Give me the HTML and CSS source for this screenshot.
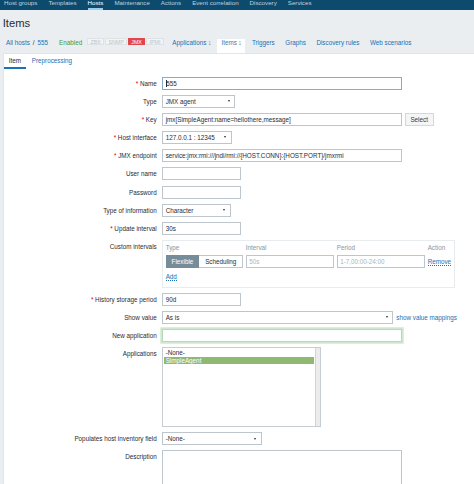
FILE: index.html
```html
<!DOCTYPE html>
<html lang="en">
<head>
<meta charset="utf-8">
<title>Items</title>
<link rel="stylesheet" href="styles.css">
</head>
<body>
<nav class="topnav">
  <a class="topnav-item">Host groups</a>
  <a class="topnav-item">Templates</a>
  <a class="topnav-item active">Hosts</a>
  <a class="topnav-item">Maintenance</a>
  <a class="topnav-item">Actions</a>
  <a class="topnav-item">Event correlation</a>
  <a class="topnav-item">Discovery</a>
  <a class="topnav-item">Services</a>
</nav>
<header class="page-header">
  <h1 class="page-title">Items</h1>
</header>
<div class="object-nav">
  <a class="crumb">All hosts</a>
  <span class="crumb-sep">/</span>
  <a class="crumb">555</a>
  <span class="status-enabled">Enabled</span>
  <span class="badges">
    <span class="badge">ZBX</span><span class="badge">SNMP</span><span class="badge badge-jmx">JMX</span><span class="badge">IPMI</span>
  </span>
  <ul class="host-tabs">
    <li class="host-tab"><a>Applications</a><sup class="count">1</sup></li>
    <li class="host-tab active"><span>Items</span><sup class="count">1</sup></li>
    <li class="host-tab"><a>Triggers</a></li>
    <li class="host-tab"><a>Graphs</a></li>
    <li class="host-tab"><a>Discovery rules</a></li>
    <li class="host-tab"><a>Web scenarios</a></li>
  </ul>
</div>
<main class="form-container">
  <ul class="tabs">
    <li class="tab active">Item</li>
    <li class="tab"><a>Preprocessing</a></li>
  </ul>
  <div class="form-grid">
    <div class="form-label"><span class="req">*</span> Name</div>
    <div class="field"><div class="input w-wide focused"><span class="caret"></span>555</div></div>

    <div class="form-label">Type</div>
    <div class="field"><div class="input select w-type">JMX agent</div></div>

    <div class="form-label"><span class="req">*</span> Key</div>
    <div class="field"><div class="input w-wide">jmx[SimpleAgent:name=hellothere,message]</div><button class="btn-grey" type="button">Select</button></div>

    <div class="form-label"><span class="req">*</span> Host interface</div>
    <div class="field"><div class="input select w-iface">127.0.0.1 : 12345</div></div>

    <div class="form-label"><span class="req">*</span> JMX endpoint</div>
    <div class="field"><div class="input w-wide">service:jmx:rmi:///jndi/rmi://{HOST.CONN}:{HOST.PORT}/jmxrmi</div></div>

    <div class="form-label">User name</div>
    <div class="field"><div class="input w-small"></div></div>

    <div class="form-label">Password</div>
    <div class="field"><div class="input w-small"></div></div>

    <div class="form-label">Type of information</div>
    <div class="field"><div class="input select w-info">Character</div></div>

    <div class="form-label"><span class="req">*</span> Update interval</div>
    <div class="field"><div class="input w-small">30s</div></div>

    <div class="form-label">Custom intervals</div>
    <div class="field">
      <div class="intervals">
        <div class="intervals-grid">
          <div class="int-head">Type</div>
          <div class="int-head">Interval</div>
          <div class="int-head">Period</div>
          <div class="int-head">Action</div>
          <div class="seg">
            <span class="seg-btn seg-flex active">Flexible</span><span class="seg-btn seg-sched">Scheduling</span>
          </div>
          <div class="input placeholder">50s</div>
          <div class="input placeholder">1-7,00:00-24:00</div>
          <div class="int-action"><a class="dotted">Remove</a></div>
        </div>
        <div class="int-add"><a class="dotted">Add</a></div>
      </div>
    </div>

    <div class="form-label"><span class="req">*</span> History storage period</div>
    <div class="field"><div class="input w-small">90d</div></div>

    <div class="form-label">Show value</div>
    <div class="field"><div class="input select w-show">As is</div><a class="mapping-link">show value mappings</a></div>

    <div class="form-label">New application</div>
    <div class="field"><div class="input w-wide highlight"></div></div>

    <div class="form-label">Applications</div>
    <div class="field">
      <div class="listbox">
        <div class="options">
          <div class="option">-None-</div>
          <div class="option selected">SimpleAgent</div>
        </div>
        <div class="scrollbar"></div>
      </div>
    </div>

    <div class="form-label">Populates host inventory field</div>
    <div class="field"><div class="input select w-inv">-None-</div></div>

    <div class="form-label">Description</div>
    <div class="field"><div class="input textarea w-wide"></div></div>
  </div>
</main>
</body>
</html>
```

FILE: styles.css
```css
* { box-sizing: border-box; }
html, body { margin: 0; padding: 0; }
body {
  width: 474px;
  height: 484px;
  overflow: hidden;
  background: #ebeef0;
  font-family: "Liberation Sans", Arial, sans-serif;
  font-size: 6.3px;
  color: #1f2c33;
}
a { color: #1a6fb3; text-decoration: none; }

/* top navigation */
.topnav {
  display: flex;
  gap: 11px;
  height: 10px;
  padding-left: 4px;
  background: #0c4a6e;
  overflow: hidden;
}
.topnav-item {
  display: block;
  height: 10px;
  line-height: 5.2px;
  font-size: 6.2px;
  color: #c3d2dc;
  white-space: nowrap;
}
.topnav-item.active {
  color: #ffffff;
  box-shadow: inset 0 -2px 0 #9ccdee;
}

/* header */
.page-header {
  height: 29.3px;
  padding: 5.5px 0 0 2.7px;
}
.page-title {
  margin: 0;
  font-size: 11.2px;
  line-height: 14px;
  font-weight: normal;
  color: #1f2c33;
}

/* object nav / breadcrumbs */
.object-nav {
  display: flex;
  align-items: flex-start;
  height: 13.4px;
  padding-left: 6px;
  white-space: nowrap;
}
.crumb, .crumb-sep, .status-enabled { line-height: 8.6px; }
.crumb-sep { margin: 0 3px; color: #1f2c33; }
.status-enabled { margin-left: 11px; color: #3f9a43; }
.badges {
  display: flex;
  gap: 1px;
  margin: -1.3px 4.7px 0 5px;
}
.badge {
  height: 7.2px;
  line-height: 6.2px;
  padding: 0 2.3px;
  font-size: 5.3px;
  color: #b9c4ca;
  border: 0.6px solid #dde2e5;
  background: #f1f3f4;
}
.badge-jmx {
  background: #e0474c;
  border-color: #e0474c;
  color: #ffffff;
}
.host-tabs {
  display: flex;
  gap: 2.5px;
  margin: 0;
  padding: 0;
  list-style: none;
}
.host-tab {
  height: 13.4px;
  padding: 0 4px;
  line-height: 8.6px;
}
.host-tab.active {
  background: #ffffff;
  color: #3f79ad;
}
.count {
  font-size: 5px;
  vertical-align: baseline;
  margin-left: 1.8px;
  color: #8ea2ad;
}

/* form container */
.form-container {
  display: block;
  margin: 0.4px -20px 0 3px;
  height: 430.6px;
  overflow: hidden;
  background: #ffffff;
  border: 1px solid #e1e5e8;
  border-bottom: none;
}
.tabs {
  display: flex;
  gap: 1px;
  margin: 0;
  padding: 0;
  list-style: none;
}
.tab {
  padding: 0 4.85px;
  line-height: 13.2px;
  border-bottom: 2px solid transparent;
}
.tab.active { border-bottom-color: #1b73b6; color: #1f2c33; }

.form-grid {
  display: grid;
  grid-template-columns: 152.7px 1fr;
  column-gap: 5.6px;
  row-gap: 5.15px;
  padding-top: 7.4px;
}
.form-label {
  text-align: right;
  line-height: 13px;
  white-space: nowrap;
}
.req { color: #d40000; }
.field {
  display: flex;
  align-items: flex-start;
  gap: 3px;
  min-height: 13px;
}
.field-show { margin-top: 1px; }

.input {
  position: relative;
  height: 13px;
  padding: 0 2.4px;
  line-height: 11px;
  background: #ffffff;
  border: 1px solid #bcc6cc;
  white-space: nowrap;
  overflow: hidden;
  flex: none;
}
.input.focused { border-color: #86aac7; }
.caret {
  display: inline-block;
  width: 0.6px;
  height: 7px;
  background: #1f2c33;
  vertical-align: -1px;
}
.w-wide { width: 239.4px; }
.w-type { width: 72.7px; }
.w-iface { width: 69.4px; }
.w-small { width: 78.7px; }
.w-info { width: 68.4px; }
.w-show { width: 231px; }
.w-inv { width: 99.4px; }

.select { padding-right: 10px; }
.select::after {
  content: "";
  position: absolute;
  right: 4.3px;
  top: 4.4px;
  border-left: 1.7px solid transparent;
  border-right: 1.7px solid transparent;
  border-top: 2.6px solid #1f2c33;
}

.btn-grey {
  width: 29px;
  height: 13px;
  padding: 0;
  margin: 0;
  font-family: inherit;
  font-size: 6.3px;
  line-height: 11px;
  color: #2e3c44;
  background: #f3f5f6;
  border: 1px solid #d2d9dd;
}

/* custom intervals */
.intervals {
  width: 292.7px;
  border: 1px solid #e8ecee;
  padding: 2px 2.4px 5.5px;
}
.intervals-grid {
  display: grid;
  grid-template-columns: 77.6px 88.3px 88.3px auto;
  column-gap: 2.6px;
  row-gap: 2.6px;
}
.int-head {
  line-height: 9.4px;
  color: #8496a0;
}
.intervals-grid .input { width: auto; }
.placeholder { color: #a9b5bc; }
.seg { display: flex; }
.seg-btn {
  height: 13px;
  line-height: 11px;
  text-align: center;
  border: 1px solid #bcc6cc;
  background: #ffffff;
  color: #1f2c33;
}
.seg-flex { width: 33.6px; }
.seg-sched { width: 44px; border-left: none; }
.seg-btn.active {
  background: #768d99;
  border-color: #768d99;
  color: #ffffff;
}
.int-action { line-height: 13px; }
.dotted { border-bottom: 0.7px dotted #1a6fb3; }
.int-add {
  margin-top: 4.2px;
  line-height: 9px;
}

.mapping-link { line-height: 13px; white-space: nowrap; }

.highlight {
  border-color: #b7d9b7;
  box-shadow: 0 0 0 1.7px #cfe7cf;
}

/* listbox */
.listbox {
  display: flex;
  width: 158.4px;
  height: 80px;
  border: 1px solid #c5cdd2;
  background: #ffffff;
}
.options {
  width: 149.4px;
  margin-left: 1px;
  padding-top: 1.3px;
}
.option {
  line-height: 7.3px;
  padding-left: 1.4px;
  white-space: nowrap;
}
.option.selected {
  background: #8fb872;
  color: #ffffff;
}
.scrollbar {
  margin-left: auto;
  width: 4.2px;
  background: #ececec;
  border-left: 0.6px solid #d4d4d4;
}

.textarea { height: 40px; }
```
